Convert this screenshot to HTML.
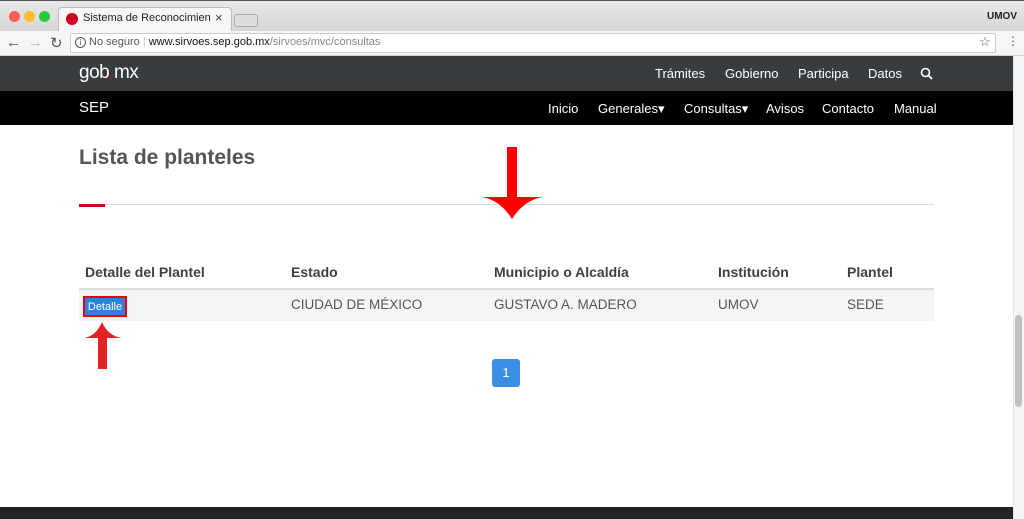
<!DOCTYPE html>
<html><head><meta charset="utf-8"><style>
*{margin:0;padding:0;box-sizing:border-box}
body{width:1024px;height:519px;overflow:hidden;font-family:"Liberation Sans",sans-serif;background:#fff;position:relative}
.abs{position:absolute}
.tabbar{left:0;top:0;width:1024px;height:31px;background:linear-gradient(#e8e8e8,#d6d6d6);border-top:1px solid #555}
.addr{left:0;top:31px;width:1024px;height:25px;background:#f6f6f6;border-bottom:1px solid #ccc}
.gob{left:0;top:56px;width:1013px;height:35px;background:#393c3e;color:#fff}
.sep{left:0;top:91px;width:1013px;height:34px;background:#000;color:#fff}
.nav{font-size:13px;color:#fff;top:0}
.th{font-size:14px;font-weight:bold;color:#404040;top:264px}
.td{font-size:13.5px;color:#555;top:297px}
</style></head><body>
<div class="abs tabbar">
 <div class="abs" style="left:9px;top:10px;width:11px;height:11px;border-radius:50%;background:#fc5f57"></div>
 <div class="abs" style="left:24px;top:10px;width:11px;height:11px;border-radius:50%;background:#fdbc2e"></div>
 <div class="abs" style="left:39px;top:10px;width:11px;height:11px;border-radius:50%;background:#28c840"></div>
 <div class="abs" style="left:58px;top:6px;width:174px;height:25px;background:#f6f6f6;border:1px solid #bbb;border-bottom:none;border-radius:4px 4px 0 0"></div>
 <div class="abs" style="left:66px;top:12px;width:12px;height:12px;border-radius:50%;background:#d0021b"></div>
 <div class="abs" style="left:83px;top:11px;font-size:11px;color:#222;white-space:nowrap;width:128px;overflow:hidden">Sistema de Reconocimiento de</div>
 <div class="abs" style="left:215px;top:9px;font-size:13px;color:#444">×</div>
 <div class="abs" style="left:234px;top:13px;width:24px;height:13px;border:1px solid #aaa;border-radius:3px;background:#ddd"></div>
 <div class="abs" style="left:987px;top:10px;font-size:10px;font-weight:bold;color:#222">UMOV</div>
</div>
<div class="abs addr">
 <div class="abs" style="left:6px;top:3px;font-size:15px;color:#555">←</div>
 <div class="abs" style="left:28px;top:3px;font-size:15px;color:#bbb">→</div>
 <div class="abs" style="left:50px;top:3px;font-size:15px;color:#555">↻</div>
 <div class="abs" style="left:70px;top:2px;width:926px;height:20px;background:#fff;border:1px solid #ccc;border-radius:2px"></div>
 <div class="abs" style="left:75px;top:6px;width:11px;height:11px;border:1px solid #555;border-radius:50%;font-size:8px;text-align:center;line-height:9px;color:#555">i</div>
 <div class="abs" style="left:89px;top:5px;font-size:11px;color:#555;white-space:nowrap">No seguro <span style="color:#ccc">|</span> <span style="color:#111">www.sirvoes.sep.gob.mx</span><span style="color:#888">/sirvoes/mvc/consultas</span></div>
 <div class="abs" style="left:979px;top:3px;font-size:13px;color:#555">☆</div>
 <div class="abs" style="left:1007px;top:3px;font-size:12px;color:#555">⋮</div>
</div>
<div class="abs gob">
 <div class="abs" style="left:79px;top:6px;font-size:19px;color:#fff;letter-spacing:-0.5px">gob<span style="color:#d0021b">.</span>mx</div>
 <div class="abs nav" style="left:655px;top:10px">Trámites</div>
 <div class="abs nav" style="left:725px;top:10px">Gobierno</div>
 <div class="abs nav" style="left:798px;top:10px">Participa</div>
 <div class="abs nav" style="left:868px;top:10px">Datos</div>
 <svg class="abs" style="left:920px;top:11px" width="14" height="14"><circle cx="5.5" cy="5.5" r="4" stroke="#fff" stroke-width="1.6" fill="none"/><line x1="8.5" y1="8.5" x2="12" y2="12" stroke="#fff" stroke-width="1.8"/></svg>
</div>
<div class="abs sep">
 <div class="abs" style="left:79px;top:8px;font-size:15px">SEP</div>
 <div class="abs nav" style="left:548px;top:10px">Inicio</div>
 <div class="abs nav" style="left:598px;top:10px">Generales▾</div>
 <div class="abs nav" style="left:684px;top:10px">Consultas▾</div>
 <div class="abs nav" style="left:766px;top:10px">Avisos</div>
 <div class="abs nav" style="left:822px;top:10px">Contacto</div>
 <div class="abs nav" style="left:894px;top:10px">Manual</div>
</div>
<div class="abs" style="left:79px;top:146px;font-size:21px;font-weight:bold;color:#545454">Lista de planteles</div>
<div class="abs" style="left:79px;top:204px;width:855px;height:1px;background:#ddd"></div>
<div class="abs" style="left:79px;top:204px;width:26px;height:3px;background:#d0021b"></div>
<div class="abs th" style="left:85px">Detalle del Plantel</div>
<div class="abs th" style="left:291px">Estado</div>
<div class="abs th" style="left:494px">Municipio o Alcaldía</div>
<div class="abs th" style="left:718px">Institución</div>
<div class="abs th" style="left:847px">Plantel</div>
<div class="abs" style="left:79px;top:288px;width:855px;height:2px;background:#ddd"></div>
<div class="abs" style="left:79px;top:290px;width:855px;height:31px;background:#f5f5f5"></div>
<div class="abs" style="left:83px;top:296px;width:44px;height:21px;border:2px solid #e00;background:#2f80e6;color:#fff;font-size:11px;text-align:center;line-height:18px">Detalle</div>
<div class="abs td" style="left:291px">CIUDAD DE MÉXICO</div>
<div class="abs td" style="left:494px">GUSTAVO A. MADERO</div>
<div class="abs td" style="left:718px">UMOV</div>
<div class="abs td" style="left:847px">SEDE</div>
<div class="abs" style="left:492px;top:359px;width:28px;height:28px;background:#3a8ee6;border-radius:3px;color:#fff;font-size:13px;text-align:center;line-height:28px">1</div>
<svg class="abs" style="left:0;top:0" width="1013" height="519">
 <rect x="507" y="147" width="10" height="52" fill="#f00"/>
 <path d="M482 197 Q500 200 512 219 Q524 200 543 197 Z" fill="#f00"/>
 <rect x="98" y="334" width="9" height="35" fill="#e52222"/>
 <path d="M84 338 Q96 336 102 322 Q108 336 122 338 Z" fill="#e52222"/>
</svg>
<div class="abs" style="left:1013px;top:56px;width:11px;height:463px;background:#f4f4f4;border-left:1px solid #e4e4e4"></div>
<div class="abs" style="left:1015px;top:315px;width:7px;height:92px;background:#c1c1c1;border-radius:4px"></div>
<div class="abs" style="left:0;top:507px;width:1013px;height:12px;background:#232323"></div>
</body></html>
